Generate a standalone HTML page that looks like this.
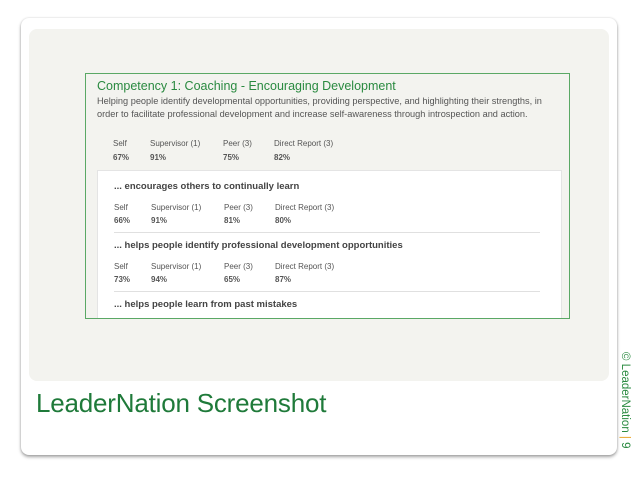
<!DOCTYPE html>
<html><head><style>
*{margin:0;padding:0;box-sizing:border-box}
body{width:638px;height:478px;background:#fff;position:relative;font-family:"Liberation Sans",sans-serif;overflow:hidden}
.card{position:absolute;left:21px;top:18px;width:596px;height:437px;background:#fff;border-radius:8px;box-shadow:0 2px 3px rgba(0,0,0,.35),0 0 2px rgba(0,0,0,.15)}
.panel{position:absolute;left:29px;top:29px;width:580px;height:352px;background:#f3f3ef;border-radius:8px}
.title{position:absolute;left:36px;top:388px;font-size:26px;color:#1f7a3a;letter-spacing:-0.2px}
.vert{position:absolute;left:615px;top:352px;width:94px;transform-origin:0 0;transform:translate(16px,0) rotate(90deg);font-size:11.5px;color:#2a8a40;white-space:nowrap}
.vert b{color:#e8a020;font-weight:normal}
.box{position:absolute;left:85px;top:73px;width:485px;height:246px;border:1px solid #5aa865;background:#f3f3ef;overflow:hidden}
.h{position:absolute;left:11px;top:5px;font-size:12.5px;color:#2a8a40}
.d{position:absolute;left:11px;top:21px;font-size:9.2px;color:#555;line-height:12.5px;width:462px}
.row{position:absolute;font-size:8px;color:#555}
.row span{position:absolute;white-space:nowrap}
.inner{position:absolute;left:11px;top:96px;width:465px;height:160px;background:#fff;border:1px solid #e4e4e4}
.q{position:absolute;left:16px;font-size:9.5px;font-weight:bold;color:#444}
.sep{position:absolute;left:16px;width:426px;height:1px;background:#e0e0e0}
</style></head><body>
<div class="card"></div>
<div class="panel"></div>
<div class="box">
<div class="h">Competency 1: Coaching - Encouraging Development</div>
<div class="d">Helping people identify developmental opportunities, providing perspective, and highlighting their strengths, in order to facilitate professional development and increase self-awareness through introspection and action.</div>
<div class="row" style="left:0;top:65px"><span style="left:27px">Self</span><span style="left:64px">Supervisor (1)</span><span style="left:137px">Peer (3)</span><span style="left:188px">Direct Report (3)</span></div>
<div class="row" style="left:0;top:79px;font-weight:bold"><span style="left:27px">67%</span><span style="left:64px">91%</span><span style="left:137px">75%</span><span style="left:188px">82%</span></div>
<div class="inner">
<div class="q" style="top:10px">... encourages others to continually learn</div>
<div class="row" style="left:0;top:32px"><span style="left:16px">Self</span><span style="left:53px">Supervisor (1)</span><span style="left:126px">Peer (3)</span><span style="left:177px">Direct Report (3)</span></div>
<div class="row" style="left:0;top:45px;font-weight:bold"><span style="left:16px">66%</span><span style="left:53px">91%</span><span style="left:126px">81%</span><span style="left:177px">80%</span></div>
<div class="sep" style="top:61px"></div>
<div class="q" style="top:69px">... helps people identify professional development opportunities</div>
<div class="row" style="left:0;top:91px"><span style="left:16px">Self</span><span style="left:53px">Supervisor (1)</span><span style="left:126px">Peer (3)</span><span style="left:177px">Direct Report (3)</span></div>
<div class="row" style="left:0;top:104px;font-weight:bold"><span style="left:16px">73%</span><span style="left:53px">94%</span><span style="left:126px">65%</span><span style="left:177px">87%</span></div>
<div class="sep" style="top:120px"></div>
<div class="q" style="top:128px">... helps people learn from past mistakes</div>
</div>
</div>
<div class="title">LeaderNation Screenshot</div>
<div class="vert">© LeaderNation <b>|</b> 9</div>
</body></html>
